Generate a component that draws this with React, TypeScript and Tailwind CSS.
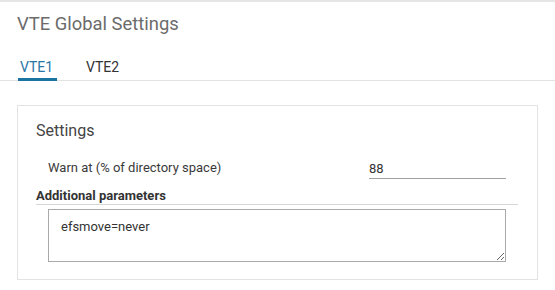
import { useState } from "react";

const tabs = ["VTE1", "VTE2"];

const App = () => {
  const [activeTab, setActiveTab] = useState<string>("VTE1");
  const [warnAt, setWarnAt] = useState<string>("88");
  const [params, setParams] = useState<string>("efsmove=never");

  return (
    <div className="w-full h-[290px] bg-white border-t-2 border-[#e6e6e6] font-['Roboto',sans-serif] text-[#333]">
      <h1 className="mt-[10px] px-[17px] text-[18.4px] leading-[24px] font-normal text-[#6b6b6b]">
        VTE Global Settings
      </h1>

      {/* Tabs */}
      <div className="mt-[19px] flex border-b border-[#e3e3e3] pl-[18px]">
        {tabs.map((tab, i) => {
          const isActive = tab === activeTab;
          return (
            <button
              key={tab}
              onClick={() => setActiveTab(tab)}
              className={`-mb-px h-[26px] w-[39px] pl-[2px] text-left text-[14px] leading-[20px] border-b-[3px] ${
                i > 0 ? "ml-[27px]" : ""
              } ${
                isActive
                  ? "border-[#1a73a0] text-[#2a76a6]"
                  : "border-transparent text-[#333]"
              }`}
            >
              {tab}
            </button>
          );
        })}
      </div>

      {/* Settings card */}
      <div className="mx-[17px] mt-[24px] border border-[#e3e3e3] pl-[18px] pr-[18px] pt-[13px] pb-[17px]">
        <h2 className="text-[16px] leading-[24px] font-normal text-[#444]">
          Settings
        </h2>

        <div className="mt-[15px] ml-[12px] flex items-start text-[13px]">
          <label className="w-[321px] leading-[20px] text-[#3a3a3a]">
            Warn at (% of directory space)
          </label>
          <input
            value={warnAt}
            onChange={(e) => setWarnAt(e.target.value)}
            className="h-[21px] w-[137px] border-b border-[#a0a0a0] text-[13px] leading-[20px] text-[#333] outline-none"
          />
        </div>

        <div className="mt-[9px] mr-[1px] border-b border-[#d6d6d6] text-[13px] leading-[16px] font-bold text-[#333]">
          Additional parameters
        </div>

        <textarea
          value={params}
          onChange={(e) => setParams(e.target.value)}
          className="mt-[4px] ml-[12px] block h-[53px] w-[458px] border border-[#a9a9a9] px-[12px] pt-[7px] text-[13px] leading-[20px] text-[#333] outline-none"
        />
      </div>
    </div>
  );
};

export default App;
